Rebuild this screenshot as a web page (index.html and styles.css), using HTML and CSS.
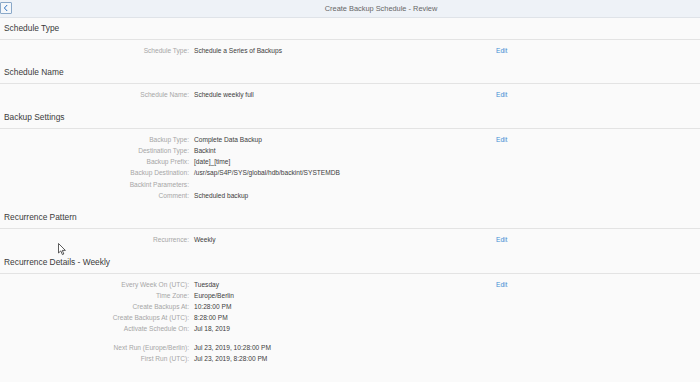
FILE: index.html
```html
<!DOCTYPE html>
<html>
<head>
<meta charset="utf-8">
<link rel="stylesheet" href="styles.css">
</head>
<body>
<div class="page">
  <header class="bar">
    <button class="back" aria-label="Back">
      <svg width="8" height="8" viewBox="0 0 8 8"><path d="M5.2 1 L2.4 4 L5.2 7" fill="none" stroke="#2a6fc0" stroke-width="1"/></svg>
    </button>
    <div class="bar-title">Create Backup Schedule - Review</div>
  </header>

  <section class="sec">
    <h2 class="sec-title">Schedule Type</h2>
    <div class="form">
      <div class="lbl">Schedule Type:</div><div class="val">Schedule a Series of Backups</div><a class="edit">Edit</a>
    </div>
  </section>

  <section class="sec">
    <h2 class="sec-title">Schedule Name</h2>
    <div class="form">
      <div class="lbl">Schedule Name:</div><div class="val">Schedule weekly full</div><a class="edit">Edit</a>
    </div>
  </section>

  <section class="sec">
    <h2 class="sec-title">Backup Settings</h2>
    <div class="form">
      <div class="lbl">Backup Type:</div><div class="val">Complete Data Backup</div><a class="edit">Edit</a>
      <div class="lbl">Destination Type:</div><div class="val">Backint</div><div></div>
      <div class="lbl">Backup Prefix:</div><div class="val">[date]_[time]</div><div></div>
      <div class="lbl">Backup Destination:</div><div class="val">/usr/sap/S4P/SYS/global/hdb/backint/SYSTEMDB</div><div></div>
      <div class="lbl">Backint Parameters:</div><div class="val"></div><div></div>
      <div class="lbl">Comment:</div><div class="val">Scheduled backup</div><div></div>
    </div>
  </section>

  <section class="sec">
    <h2 class="sec-title">Recurrence Pattern</h2>
    <div class="form">
      <div class="lbl">Recurrence:</div><div class="val">Weekly</div><a class="edit">Edit</a>
    </div>
  </section>

  <section class="sec">
    <h2 class="sec-title">Recurrence Details - Weekly</h2>
    <div class="form">
      <div class="lbl">Every Week On (UTC):</div><div class="val">Tuesday</div><a class="edit">Edit</a>
      <div class="lbl">Time Zone:</div><div class="val">Europe/Berlin</div><div></div>
      <div class="lbl">Create Backups At:</div><div class="val">10:28:00 PM</div><div></div>
      <div class="lbl">Create Backups At (UTC):</div><div class="val">8:28:00 PM</div><div></div>
      <div class="lbl">Activate Schedule On:</div><div class="val">Jul 18, 2019</div><div></div>
      <div class="spacer"></div>
      <div class="lbl">Next Run (Europe/Berlin):</div><div class="val">Jul 23, 2019, 10:28:00 PM</div><div></div>
      <div class="lbl">First Run (UTC):</div><div class="val">Jul 23, 2019, 8:28:00 PM</div><div></div>
    </div>
  </section>

  <svg class="cursor" width="9" height="13" viewBox="0 0 9 13"><path d="M0.5 0.5 L0.5 10 L2.8 7.9 L4.4 11.6 L5.8 11 L4.3 7.4 L7.4 7.4 Z" fill="#fff" stroke="#333" stroke-width="0.8" stroke-linejoin="round"/></svg>
</div>
</body>
</html>
```

FILE: styles.css
```css
* { box-sizing: border-box; }
html, body {
  margin: 0;
  padding: 0;
  background: #fafafa;
  font-family: "Liberation Sans", Arial, sans-serif;
}
.page {
  position: relative;
  width: 700px;
  height: 382px;
  overflow: hidden;
  background: #fafafa;
}
.bar {
  position: relative;
  height: 18px;
  background: #eef2f7;
  border-bottom: 1px solid #dfe3e8;
  display: flex;
  align-items: center;
  justify-content: center;
}
.back {
  position: absolute;
  left: 0;
  top: 2px;
  width: 12px;
  height: 12px;
  padding: 0;
  margin: 0;
  border: 1px solid #8aa8c8;
  border-radius: 1px;
  background: #f4f7fa;
  display: flex;
  align-items: center;
  justify-content: center;
}
.back svg { display: block; }
.bar-title {
  font-size: 7.4px;
  color: #666;
  margin-left: 62px;
}
.sec-title {
  margin: 0;
  height: 22px;
  line-height: 21px;
  padding-left: 4px;
  font-size: 8.4px;
  font-weight: normal;
  color: #3a3a3a;
  border-bottom: 1px solid #e3e3e3;
}
.form {
  display: grid;
  grid-template-columns: 189px 297px 60px;
  column-gap: 5px;
  padding: 5px 0 6.2px 0;
  font-size: 6.6px;
  line-height: 11.2px;
}
.lbl {
  text-align: right;
  color: #a6a6a6;
  white-space: nowrap;
}
.val {
  color: #3c3c3c;
  white-space: nowrap;
}
.edit {
  color: #3f8fd4;
  cursor: pointer;
}
.spacer {
  grid-column: 1 / -1;
  height: 7px;
}
.cursor {
  position: absolute;
  left: 58px;
  top: 243px;
}
```
